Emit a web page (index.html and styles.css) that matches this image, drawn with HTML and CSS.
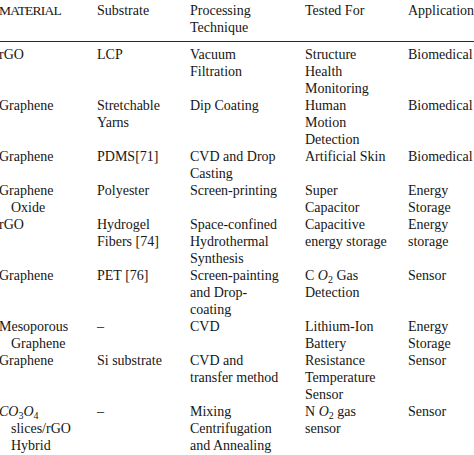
FILE: index.html
```html
<!DOCTYPE html>
<html>
<head>
<meta charset="utf-8">
<link rel="stylesheet" href="styles.css">
</head>
<body>
<div class="sheet">
  <div class="row head">
    <div class="c1">MATERIAL</div>
    <div>Substrate</div>
    <div>Processing<br>Technique</div>
    <div>Tested For</div>
    <div>Application</div>
  </div>
  <div class="row">
    <div class="c1">rGO</div>
    <div>LCP</div>
    <div>Vacuum<br>Filtration</div>
    <div>Structure<br>Health<br>Monitoring</div>
    <div>Biomedical</div>
  </div>
  <div class="row">
    <div class="c1">Graphene</div>
    <div>Stretchable<br>Yarns</div>
    <div>Dip Coating</div>
    <div>Human<br>Motion<br>Detection</div>
    <div>Biomedical</div>
  </div>
  <div class="row">
    <div class="c1">Graphene</div>
    <div>PDMS[71]</div>
    <div>CVD and Drop<br>Casting</div>
    <div>Artificial Skin</div>
    <div>Biomedical</div>
  </div>
  <div class="row">
    <div class="c1">Graphene<br><span class="ind">Oxide</span></div>
    <div>Polyester</div>
    <div>Screen-printing</div>
    <div>Super<br>Capacitor</div>
    <div>Energy<br>Storage</div>
  </div>
  <div class="row">
    <div class="c1">rGO</div>
    <div>Hydrogel<br>Fibers [74]</div>
    <div>Space-confined<br>Hydrothermal<br>Synthesis</div>
    <div>Capacitive<br>energy storage</div>
    <div>Energy<br>storage</div>
  </div>
  <div class="row">
    <div class="c1">Graphene</div>
    <div>PET [76]</div>
    <div>Screen-painting<br>and Drop-<br>coating</div>
    <div>C <i>O</i><sub>2</sub> Gas<br>Detection</div>
    <div>Sensor</div>
  </div>
  <div class="row">
    <div class="c1">Mesoporous<br><span class="ind">Graphene</span></div>
    <div>–</div>
    <div>CVD</div>
    <div>Lithium-Ion<br>Battery</div>
    <div>Energy<br>Storage</div>
  </div>
  <div class="row">
    <div class="c1">Graphene</div>
    <div>Si substrate</div>
    <div>CVD and<br>transfer method</div>
    <div>Resistance<br>Temperature<br>Sensor</div>
    <div>Sensor</div>
  </div>
  <div class="row">
    <div class="c1"><i>CO</i><sub>3</sub><i>O</i><sub>4</sub><br><span class="ind">slices/rGO</span><br><span class="ind">Hybrid</span></div>
    <div>–</div>
    <div>Mixing<br>Centrifugation<br>and Annealing</div>
    <div>N <i>O</i><sub>2</sub> gas<br>sensor</div>
    <div>Sensor</div>
  </div>
</div>
</body>
</html>
```

FILE: styles.css
```css
html, body {
  margin: 0;
  padding: 0;
  background: #ffffff;
  overflow: hidden;
}
body {
  width: 474px;
  height: 455px;
}
.sheet {
  margin-left: -1px;
  padding-top: 2px;
  font-family: "Liberation Serif", "DejaVu Serif", serif;
  font-size: 14px;
  line-height: 17px;
  color: #161616;
}
.row {
  display: grid;
  grid-template-columns: 98px 93px 115px 103px 66px;
  white-space: nowrap;
}
.head {
  padding-bottom: 5px;
  border-bottom: 1.5px solid #2a2a2a;
  margin-bottom: 4px;
}
.head .c1 {
  letter-spacing: -0.8px;
  font-size: 13.5px;
}
.ind {
  display: inline-block;
  padding-left: 12px;
}
sub {
  font-size: 10px;
  line-height: 0;
  vertical-align: -3px;
}
```
